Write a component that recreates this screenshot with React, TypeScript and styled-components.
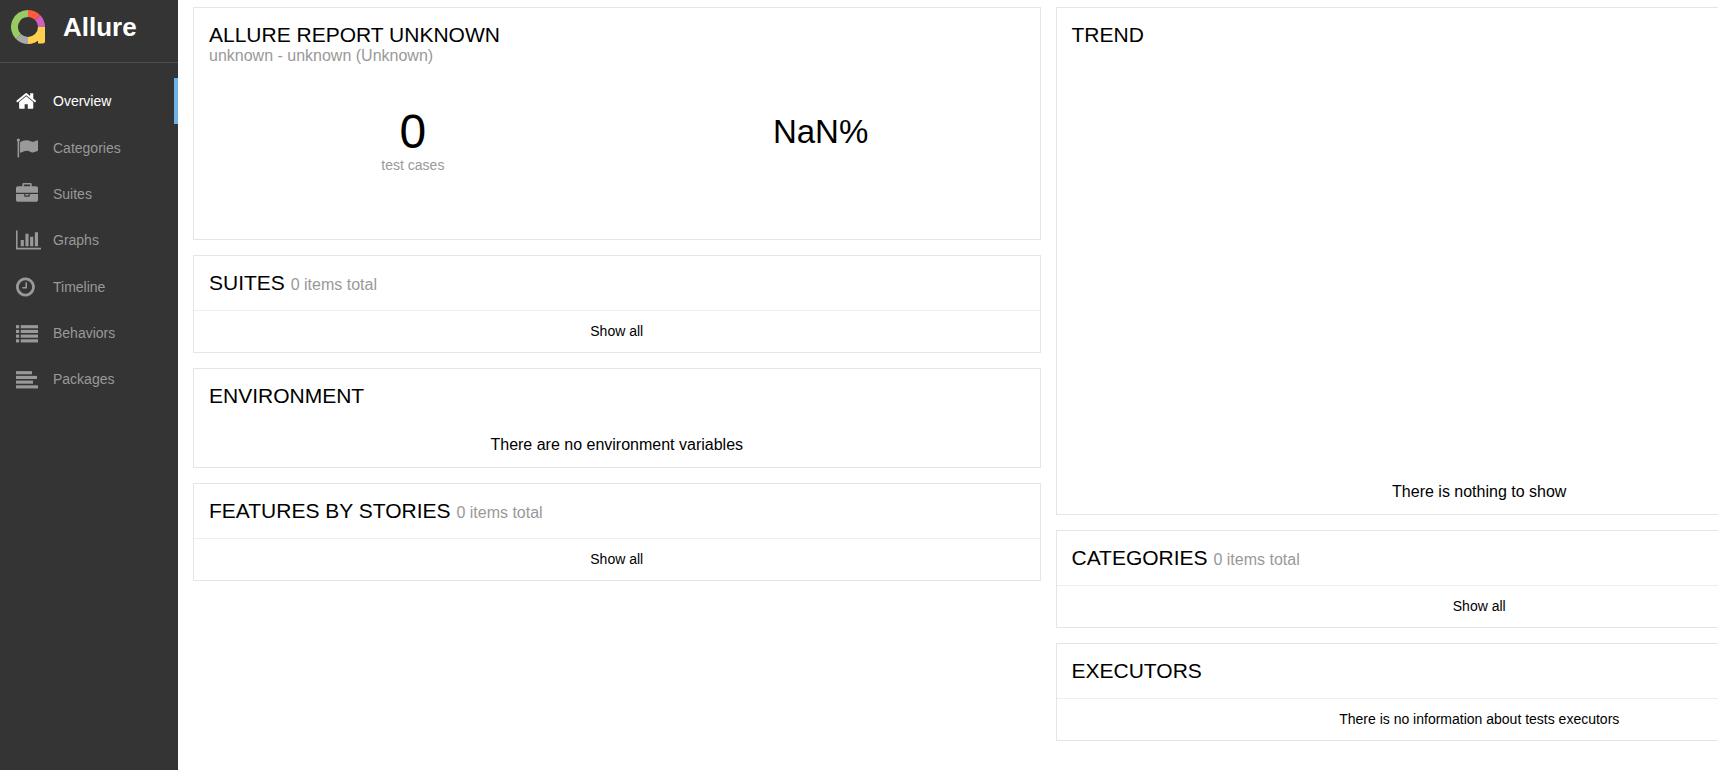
import React from 'react';
import styled, { createGlobalStyle } from 'styled-components';

const Global = createGlobalStyle`
  html, body { margin: 0; padding: 0; height: 100%; background: #fff; }
  body { font-family: "Liberation Sans", Arial, sans-serif; font-size: 14px; color: #000; overflow: hidden; }
  #root { height: 100%; }
  * { box-sizing: border-box; }
`;

const Page = styled.div`
  display: flex;
  width: 1718px;
  height: 770px;
  overflow: hidden;
`;
const Sidebar = styled.aside`
  flex: 0 0 178px;
  background: #343434;
  display: flex;
  flex-direction: column;
`;
const Brand = styled.div`
  height: 63px;
  border-bottom: 1px solid #4f4f4f;
  display: flex;
  align-items: flex-start;
  padding: 9px 0 0 11px;
  gap: 16px;
`;
const BrandText = styled.span`
  color: #fff;
  font-size: 26px;
  font-weight: 700;
  line-height: 30px;
  margin-top: 3px;
`;
const Nav = styled.nav`
  display: flex;
  flex-direction: column;
  padding-top: 15px;
`;
const NavItem = styled.a<{ $active?: boolean }>`
  height: 46.35px;
  display: flex;
  align-items: center;
  padding-left: 16px;
  color: ${p => (p.$active ? '#fff' : '#999')};
  font-size: 14px;
  border-right: 4px solid ${p => (p.$active ? '#6eb2ec' : 'transparent')};
`;
const IconSlot = styled.span`
  flex: 0 0 37px;
  display: flex;
  align-items: center;
`;
const Main = styled.main`
  flex: 0 0 auto;
  display: grid;
  grid-template-columns: 847.5px 847.5px;
  column-gap: 15px;
  padding: 7px 0 0 15px;
  align-items: start;
`;
const Column = styled.div`
  display: flex;
  flex-direction: column;
  gap: 15px;
`;
const Card = styled.section<{ $height?: number }>`
  border: 1px solid #e5e5e5;
  background: #fff;
  display: flex;
  flex-direction: column;
  ${p => (p.$height ? `height: ${p.$height}px;` : '')}
`;
const CardHead = styled.div`
  padding: 15px 15px 0;
  height: 54px;
`;
const CardTitle = styled.h2`
  margin: 0;
  font-size: 21px;
  font-weight: 400;
  line-height: 24px;
  color: #000;
`;
const Count = styled.span`
  font-size: 16px;
  color: #999;
`;
const SubTitle = styled.div`
  font-size: 16px;
  line-height: 16px;
  color: #999;
  margin-top: 1px;
`;
const Stats = styled.div`
  display: grid;
  grid-template-columns: 1fr 1fr;
  padding: 46px 15px 0;
`;
const Stat = styled.div`
  text-align: center;
`;
const StatValue = styled.div<{ $size: number }>`
  font-size: ${p => p.$size}px;
  line-height: 48px;
`;
const StatLabel = styled.div`
  font-size: 14px;
  line-height: 16px;
  color: #999;
  margin-top: 1px;
`;
const Foot = styled.div`
  border-top: 1px solid #eee;
  height: 42px;
  padding-bottom: 1px;
  display: flex;
  align-items: center;
  justify-content: center;
  font-size: 14px;
`;
const BodyText = styled.div<{ $grow?: boolean }>`
  font-size: 16px;
  line-height: 18px;
  text-align: center;
  ${p => (p.$grow ? 'margin-top: auto; padding-bottom: 13px;' : 'margin-top: 13px;')}
`;
const Glyph = styled.svg`
  display: block;
  fill: currentColor;
`;
const LogoSvg = styled.svg`
  display: block;
  flex: none;
`;

const Logo = () => (
  <LogoSvg width="36" height="36" viewBox="0 0 36 36">
    <g fill="none" strokeWidth="7">
      <path d="M17 4.5 A13.5 13.5 0 0 1 26.55 8.45" stroke="#fd5a3e" />
      <path d="M26.55 8.45 A13.5 13.5 0 0 1 30.5 18" stroke="#d35ebe" />
      <path d="M30.5 18 A13.5 13.5 0 0 1 17 31.5" stroke="#ffd050" />
      <path d="M17 31.5 A13.5 13.5 0 0 1 7.45 27.55" stroke="#aaa" />
      <path d="M7.45 27.55 A13.5 13.5 0 0 1 17 4.5" stroke="#97cc64" />
    </g>
    <path d="M27 18 H34 V32 Q34 34.5 31.5 34.5 H27 Z" fill="#ffd050" />
  </LogoSvg>
);

const icon = (w: number, d: React.ReactNode) => (
  <Glyph width={(w * 22) / 1792} height="22" viewBox={`0 0 ${w} 1792`}>{d}</Glyph>
);

const HomeIcon = () => icon(1664, <path d="M1408 992v480q0 26-19 45t-45 19h-384v-384h-256v384h-384q-26 0-45-19t-19-45v-480q0-1 .5-3t.5-3l575-474 575 474q1 2 1 6zm223-69l-62 74q-8 9-21 11h-3q-13 0-21-7l-692-577-692 577q-12 8-24 7-13-2-21-11l-62-74q-8-10-7-23.5t11-21.5l719-599q32-26 76-26t76 26l244 204v-195q0-14 9-23t23-9h192q14 0 23 9t9 23v408l219 182q10 8 11 21.5t-7 23.5z" />);
const FlagIcon = () => icon(1792, <path d="M320 256q0 72-64 110v1266q0 13-9.5 22.5t-22.5 9.5h-64q-13 0-22.5-9.5t-9.5-22.5v-1266q-64-38-64-110 0-53 37.5-90.5t90.5-37.5 90.5 37.5 37.5 90.5zm1472 64v763q0 25-12.5 38.5t-39.5 27.5q-215 116-369 116-61 0-123.5-22t-108.5-48-115.5-48-142.5-22q-192 0-464 146-17 9-33 9-26 0-45-19t-19-45v-742q0-32 31-55 21-14 79-43 236-120 421-120 107 0 200 29t219 88q38 19 88 19 54 0 117.5-21t110-47 88-47 54.5-21q26 0 45 19t19 45z" />);
const BriefcaseIcon = () => icon(1792, <path d="M640 256h512v-128h-512v128zm1152 640v480q0 66-47 113t-113 47h-1472q-66 0-113-47t-47-113v-480h672v160q0 26 19 45t45 19h320q26 0 45-19t19-45v-160h672zm-768 0v128h-256v-128h256zm768-480v384h-1792v-384q0-66 47-113t113-47h352v-160q0-40 28-68t68-28h576q40 0 68 28t28 68v160h352q66 0 113 47t47 113z" />);
const ChartIcon = () => icon(2048, <path d="M640 896v512h-256v-512h256zm384-512v1024h-256v-1024h256zm1024 1152v128h-2048v-1536h128v1408h1920zm-640-896v768h-256v-768h256zm384-384v1152h-256v-1152h256z" />);
const ClockIcon = () => icon(1536, <path transform="translate(-128 0)" d="M1024 544v448q0 14-9 23t-23 9h-320q-14 0-23-9t-9-23v-64q0-14 9-23t23-9h224v-352q0-14 9-23t23-9h64q14 0 23 9t9 23zm416 352q0-148-73-273t-198-198-273-73-273 73-198 198-73 273 73 273 198 198 273 73 273-73 198-198 73-273zm224 0q0 209-103 385.5t-279.5 279.5-385.5 103-385.5-103-279.5-279.5-103-385.5 103-385.5 279.5-279.5 385.5-103 385.5 103 279.5 279.5 103 385.5z" />);
const ListIcon = () => icon(1792, <g>{[256, 640, 1024, 1408].map(y => <React.Fragment key={y}><rect x="0" y={y} width="256" height="256" /><rect x="384" y={y} width="1408" height="256" /></React.Fragment>)}</g>);
const AlignIcon = () => icon(1792, <g><rect x="0" y="256" width="1303" height="256" /><rect x="0" y="640" width="1710" height="256" /><rect x="0" y="1024" width="1385" height="256" /><rect x="0" y="1408" width="1792" height="256" /></g>);

const navItems: [string, () => React.ReactElement][] = [
  ['Overview', HomeIcon],
  ['Categories', FlagIcon],
  ['Suites', BriefcaseIcon],
  ['Graphs', ChartIcon],
  ['Timeline', ClockIcon],
  ['Behaviors', ListIcon],
  ['Packages', AlignIcon],
];

export default function App() {
  return (
    <Page>
      <Global />
      <Sidebar>
        <Brand>
          <Logo />
          <BrandText>Allure</BrandText>
        </Brand>
        <Nav>
          {navItems.map(([label, I], i) => (
            <NavItem key={label} $active={i === 0}>
              <IconSlot><I /></IconSlot>
              {label}
            </NavItem>
          ))}
        </Nav>
      </Sidebar>
      <Main>
        <Column>
          <Card $height={233}>
            <CardHead>
              <CardTitle>ALLURE REPORT UNKNOWN</CardTitle>
              <SubTitle>unknown - unknown (Unknown)</SubTitle>
            </CardHead>
            <Stats>
              <Stat>
                <StatValue $size={48}>0</StatValue>
                <StatLabel>test cases</StatLabel>
              </Stat>
              <Stat>
                <StatValue $size={33}>NaN%</StatValue>
              </Stat>
            </Stats>
          </Card>
          <Card>
            <CardHead><CardTitle>SUITES <Count>0 items total</Count></CardTitle></CardHead>
            <Foot>Show all</Foot>
          </Card>
          <Card $height={100}>
            <CardHead><CardTitle>ENVIRONMENT</CardTitle></CardHead>
            <BodyText>There are no environment variables</BodyText>
          </Card>
          <Card>
            <CardHead><CardTitle>FEATURES BY STORIES <Count>0 items total</Count></CardTitle></CardHead>
            <Foot>Show all</Foot>
          </Card>
        </Column>
        <Column>
          <Card $height={508}>
            <CardHead><CardTitle>TREND</CardTitle></CardHead>
            <BodyText $grow>There is nothing to show</BodyText>
          </Card>
          <Card>
            <CardHead><CardTitle>CATEGORIES <Count>0 items total</Count></CardTitle></CardHead>
            <Foot>Show all</Foot>
          </Card>
          <Card>
            <CardHead><CardTitle>EXECUTORS</CardTitle></CardHead>
            <Foot>There is no information about tests executors</Foot>
          </Card>
        </Column>
      </Main>
    </Page>
  );
}
